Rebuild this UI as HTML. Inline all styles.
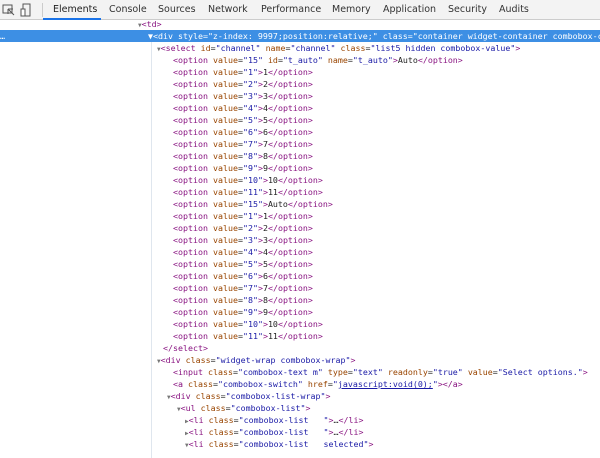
<!DOCTYPE html>
<html><head><style>
*{margin:0;padding:0;box-sizing:border-box}
body{width:600px;height:450px;overflow:hidden;background:#fff;position:relative;font-family:"DejaVu Sans Mono","Liberation Mono",monospace;font-size:8.3px}
#tb{position:absolute;left:0;top:0;width:600px;height:20px;background:#f3f3f3;border-bottom:1px solid #ccc;font-family:"DejaVu Sans","Liberation Sans",sans-serif;font-size:9.5px;color:#333;z-index:2}
#tb span{position:absolute;top:4px}
#ul{position:absolute;left:43px;top:18px;width:58px;height:2px;background:#1a73e8}
.sep{position:absolute;left:42px;top:3px;width:1px;height:14px;background:#ccc}
#w{position:absolute;left:0;top:-6px;width:600px;height:460px}
.r{position:absolute;left:0;width:600px;height:12px;line-height:12px;white-space:pre;color:#222}
.t{color:#881280}.a{color:#994500}.v{color:#1a1aa6}
.sel{background:#3d8fe4;color:#fff}
.sel span{color:#fff!important}
.ar{color:#777;font-size:6px}
#vl{position:absolute;left:151px;top:44px;width:1px;height:420px;background:#dfe6ee}
</style></head><body>
<div id="tb">
<svg style="position:absolute;left:2px;top:4px" width="14" height="12"><rect x="1" y="1" width="9" height="8" fill="none" stroke="#555"/><path d="M6 5 L12 11 M6 5 L6 10 M6 5 L11 5" stroke="#555" fill="none"/></svg>
<svg style="position:absolute;left:20px;top:3px" width="12" height="14"><rect x="3" y="1" width="7" height="12" fill="none" stroke="#555"/><rect x="1" y="6" width="4" height="7" fill="#fff" stroke="#555"/></svg>
<div class="sep"></div>
<span style="left:53px;color:#222">Elements</span>
<span style="left:109px">Console</span>
<span style="left:158px">Sources</span>
<span style="left:208px">Network</span>
<span style="left:261px">Performance</span>
<span style="left:332px">Memory</span>
<span style="left:383px">Application</span>
<span style="left:448px">Security</span>
<span style="left:499px">Audits</span>
<div id="ul"></div>
</div>
<div id="w">
<div id="vl"></div>
<div class="r" style="top:24px;padding-left:138px"><span class="ar">▼</span><span class="t">&lt;td&gt;</span></div>
<div class="r sel" style="top:36px;padding-left:148px"><span style="position:absolute;left:0">…</span><span>▼&lt;div style="z-index: 9997;position:relative;" class="container widget-container combobox-c</span></div>
<div class="r" style="top:48px;padding-left:157px"><span class="ar">▼</span><span class="t">&lt;select</span> <span class="a">id</span>=<span class="v">"channel"</span> <span class="a">name</span>=<span class="v">"channel"</span> <span class="a">class</span>=<span class="v">"list5 hidden combobox-value"</span><span class="t">&gt;</span></div>
<div class="r" style="top:348px;padding-left:163px"><span class="t">&lt;/select&gt;</span></div>
<div class="r" style="top:360px;padding-left:157px"><span class="ar">▼</span><span class="t">&lt;div</span> <span class="a">class</span>=<span class="v">"widget-wrap combobox-wrap"</span><span class="t">&gt;</span></div>
<div class="r" style="top:372px;padding-left:173px"><span class="t">&lt;input</span> <span class="a">class</span>=<span class="v">"combobox-text m"</span> <span class="a">type</span>=<span class="v">"text"</span> <span class="a">readonly</span>=<span class="v">"true"</span> <span class="a">value</span>=<span class="v">"Select options."</span><span class="t">&gt;</span></div>
<div class="r" style="top:384px;padding-left:173px"><span class="t">&lt;a</span> <span class="a">class</span>=<span class="v">"combobox-switch"</span> <span class="a">href</span>=<span class="v">"<u>javascript:void(0);</u>"</span><span class="t">&gt;&lt;/a&gt;</span></div>
<div class="r" style="top:396px;padding-left:167px"><span class="ar">▼</span><span class="t">&lt;div</span> <span class="a">class</span>=<span class="v">"combobox-list-wrap"</span><span class="t">&gt;</span></div>
<div class="r" style="top:408px;padding-left:177px"><span class="ar">▼</span><span class="t">&lt;ul</span> <span class="a">class</span>=<span class="v">"combobox-list"</span><span class="t">&gt;</span></div>
<div class="r" style="top:420px;padding-left:185px"><span class="ar">▶</span><span class="t">&lt;li</span> <span class="a">class</span>=<span class="v">"combobox-list   "</span><span class="t">&gt;</span>…<span class="t">&lt;/li&gt;</span></div>
<div class="r" style="top:432px;padding-left:185px"><span class="ar">▶</span><span class="t">&lt;li</span> <span class="a">class</span>=<span class="v">"combobox-list   "</span><span class="t">&gt;</span>…<span class="t">&lt;/li&gt;</span></div>
<div class="r" style="top:444px;padding-left:185px"><span class="ar">▼</span><span class="t">&lt;li</span> <span class="a">class</span>=<span class="v">"combobox-list   selected"</span><span class="t">&gt;</span></div>
<div class="r" style="top:60px;padding-left:173px"><span class="t">&lt;option</span> <span class="a">value</span>=<span class="v">"15"</span> <span class="a">id</span>=<span class="v">"t_auto"</span> <span class="a">name</span>=<span class="v">"t_auto"</span><span class="t">&gt;</span>Auto<span class="t">&lt;/option&gt;</span></div>
<div class="r" style="top:72px;padding-left:173px"><span class="t">&lt;option</span> <span class="a">value</span>=<span class="v">"1"</span><span class="t">&gt;</span>1<span class="t">&lt;/option&gt;</span></div>
<div class="r" style="top:84px;padding-left:173px"><span class="t">&lt;option</span> <span class="a">value</span>=<span class="v">"2"</span><span class="t">&gt;</span>2<span class="t">&lt;/option&gt;</span></div>
<div class="r" style="top:96px;padding-left:173px"><span class="t">&lt;option</span> <span class="a">value</span>=<span class="v">"3"</span><span class="t">&gt;</span>3<span class="t">&lt;/option&gt;</span></div>
<div class="r" style="top:108px;padding-left:173px"><span class="t">&lt;option</span> <span class="a">value</span>=<span class="v">"4"</span><span class="t">&gt;</span>4<span class="t">&lt;/option&gt;</span></div>
<div class="r" style="top:120px;padding-left:173px"><span class="t">&lt;option</span> <span class="a">value</span>=<span class="v">"5"</span><span class="t">&gt;</span>5<span class="t">&lt;/option&gt;</span></div>
<div class="r" style="top:132px;padding-left:173px"><span class="t">&lt;option</span> <span class="a">value</span>=<span class="v">"6"</span><span class="t">&gt;</span>6<span class="t">&lt;/option&gt;</span></div>
<div class="r" style="top:144px;padding-left:173px"><span class="t">&lt;option</span> <span class="a">value</span>=<span class="v">"7"</span><span class="t">&gt;</span>7<span class="t">&lt;/option&gt;</span></div>
<div class="r" style="top:156px;padding-left:173px"><span class="t">&lt;option</span> <span class="a">value</span>=<span class="v">"8"</span><span class="t">&gt;</span>8<span class="t">&lt;/option&gt;</span></div>
<div class="r" style="top:168px;padding-left:173px"><span class="t">&lt;option</span> <span class="a">value</span>=<span class="v">"9"</span><span class="t">&gt;</span>9<span class="t">&lt;/option&gt;</span></div>
<div class="r" style="top:180px;padding-left:173px"><span class="t">&lt;option</span> <span class="a">value</span>=<span class="v">"10"</span><span class="t">&gt;</span>10<span class="t">&lt;/option&gt;</span></div>
<div class="r" style="top:192px;padding-left:173px"><span class="t">&lt;option</span> <span class="a">value</span>=<span class="v">"11"</span><span class="t">&gt;</span>11<span class="t">&lt;/option&gt;</span></div>
<div class="r" style="top:204px;padding-left:173px"><span class="t">&lt;option</span> <span class="a">value</span>=<span class="v">"15"</span><span class="t">&gt;</span>Auto<span class="t">&lt;/option&gt;</span></div>
<div class="r" style="top:216px;padding-left:173px"><span class="t">&lt;option</span> <span class="a">value</span>=<span class="v">"1"</span><span class="t">&gt;</span>1<span class="t">&lt;/option&gt;</span></div>
<div class="r" style="top:228px;padding-left:173px"><span class="t">&lt;option</span> <span class="a">value</span>=<span class="v">"2"</span><span class="t">&gt;</span>2<span class="t">&lt;/option&gt;</span></div>
<div class="r" style="top:240px;padding-left:173px"><span class="t">&lt;option</span> <span class="a">value</span>=<span class="v">"3"</span><span class="t">&gt;</span>3<span class="t">&lt;/option&gt;</span></div>
<div class="r" style="top:252px;padding-left:173px"><span class="t">&lt;option</span> <span class="a">value</span>=<span class="v">"4"</span><span class="t">&gt;</span>4<span class="t">&lt;/option&gt;</span></div>
<div class="r" style="top:264px;padding-left:173px"><span class="t">&lt;option</span> <span class="a">value</span>=<span class="v">"5"</span><span class="t">&gt;</span>5<span class="t">&lt;/option&gt;</span></div>
<div class="r" style="top:276px;padding-left:173px"><span class="t">&lt;option</span> <span class="a">value</span>=<span class="v">"6"</span><span class="t">&gt;</span>6<span class="t">&lt;/option&gt;</span></div>
<div class="r" style="top:288px;padding-left:173px"><span class="t">&lt;option</span> <span class="a">value</span>=<span class="v">"7"</span><span class="t">&gt;</span>7<span class="t">&lt;/option&gt;</span></div>
<div class="r" style="top:300px;padding-left:173px"><span class="t">&lt;option</span> <span class="a">value</span>=<span class="v">"8"</span><span class="t">&gt;</span>8<span class="t">&lt;/option&gt;</span></div>
<div class="r" style="top:312px;padding-left:173px"><span class="t">&lt;option</span> <span class="a">value</span>=<span class="v">"9"</span><span class="t">&gt;</span>9<span class="t">&lt;/option&gt;</span></div>
<div class="r" style="top:324px;padding-left:173px"><span class="t">&lt;option</span> <span class="a">value</span>=<span class="v">"10"</span><span class="t">&gt;</span>10<span class="t">&lt;/option&gt;</span></div>
<div class="r" style="top:336px;padding-left:173px"><span class="t">&lt;option</span> <span class="a">value</span>=<span class="v">"11"</span><span class="t">&gt;</span>11<span class="t">&lt;/option&gt;</span></div>
</div>
</body></html>
